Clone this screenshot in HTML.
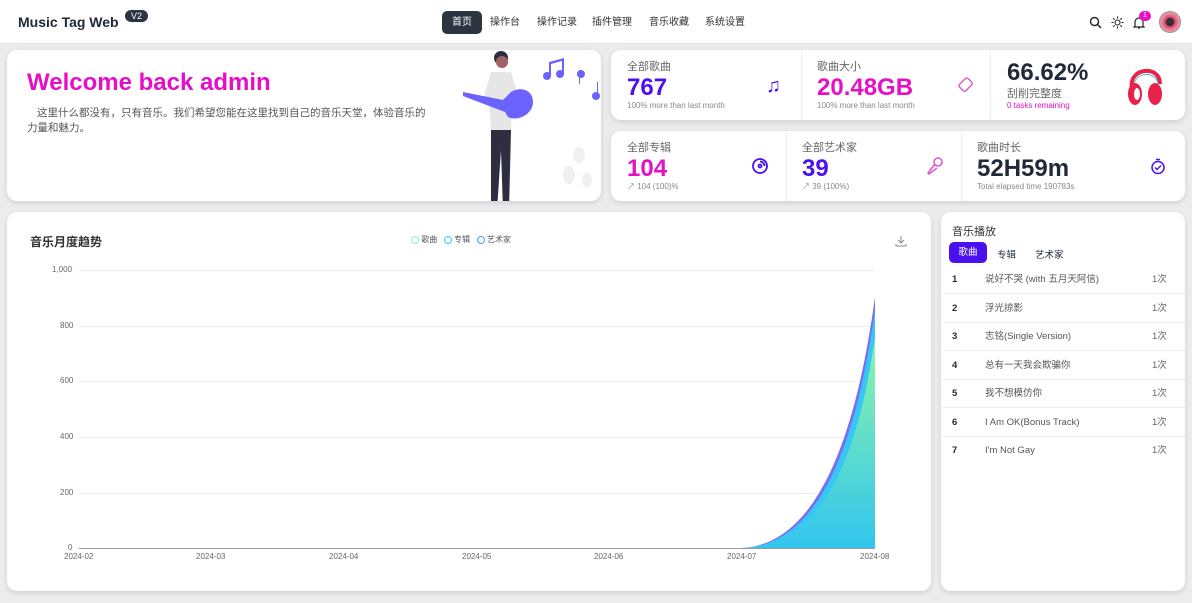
<!DOCTYPE html>
<html><head><meta charset="utf-8"><style>
*{box-sizing:border-box;margin:0;padding:0}
body{width:1192px;height:603px;background:#ececec;font-family:"Liberation Sans","Noto Sans CJK SC",sans-serif;position:relative;overflow:hidden;color:#1f2937}
.card{position:absolute;background:#fff;border-radius:10px;box-shadow:0 2px 6px rgba(0,0,0,.12)}
.hdr{position:absolute;left:0;top:0;width:1192px;height:44px;background:#fff;border-bottom:1px solid #e5e5e5}
.nav{position:absolute;top:11px;font-size:10px;color:#333;height:23px;line-height:23px;padding:0 10px;border-radius:5px}
.lbl{position:absolute;font-size:11px;color:#666;line-height:12px}
.big{position:absolute;font-size:24px;font-weight:bold;line-height:24px}
.sm{position:absolute;font-size:8px;color:#888;line-height:9px}
.row{position:absolute;left:0;width:244px;height:29px;line-height:29px;border-bottom:1px solid #eee;font-size:9.5px}
.row b{position:absolute;left:11px;top:0}
.row span{position:absolute;left:44px;top:0;color:#555}
.row i{position:absolute;left:211px;top:0;color:#666;font-style:normal}
.ax{position:absolute;font-size:8px;color:#666}
</style></head><body>
<div class="hdr">
<div style="position:absolute;left:18px;top:14px;font-size:14px;font-weight:bold">Music Tag Web</div>
<div style="position:absolute;left:125px;top:10px;background:#2b3440;color:#fff;font-size:9px;border-radius:8px;padding:1px 6px">V2</div>
<div class="nav" style="left:442px;background:#2b3440;color:#fff">首页</div>
<div class="nav" style="left:480px">操作台</div>
<div class="nav" style="left:527px">操作记录</div>
<div class="nav" style="left:582px">插件管理</div>
<div class="nav" style="left:639px">音乐收藏</div>
<div class="nav" style="left:695px">系统设置</div>
<svg style="position:absolute;left:1089px;top:16px" width="13" height="13" viewBox="0 0 13 13" fill="none" stroke="#222" stroke-width="1.4"><circle cx="5.5" cy="5.5" r="4"/><path d="M8.5 8.5l3.5 3.5"/></svg>
<svg style="position:absolute;left:1111px;top:16px" width="13" height="13" viewBox="0 0 13 13" fill="none" stroke="#222" stroke-width="1.1"><circle cx="6.5" cy="6.5" r="2.5"/><path d="M6.5 0.5v2M6.5 10.5v2M0.5 6.5h2M10.5 6.5h2M2.2 2.2l1.4 1.4M9.4 9.4l1.4 1.4M2.2 10.8l1.4-1.4M9.4 3.6l1.4-1.4"/></svg>
<svg style="position:absolute;left:1133px;top:16px" width="12" height="13" viewBox="0 0 12 13" fill="none" stroke="#222" stroke-width="1.2"><path d="M2 10V6a4 4 0 018 0v4l1 1H1zM5 12h2"/></svg>
<div style="position:absolute;left:1139px;top:11px;background:#e60fc8;color:#fff;font-size:7px;border-radius:6px;padding:0 4px;line-height:10px">1</div>
<div style="position:absolute;left:1159px;top:11px;width:22px;height:22px;border-radius:50%;background:radial-gradient(circle,#333 25%,#d46 30%,#e9a 60%,#888 70%)"></div>
</div>

<div class="card" style="left:7px;top:50px;width:594px;height:151px;overflow:hidden">
<div style="position:absolute;left:20px;top:19px;font-size:24px;font-weight:bold;color:#e60fc8">Welcome back admin</div>
<div style="position:absolute;left:20px;top:56px;width:400px;font-size:10.5px;line-height:15px;color:#555;text-indent:10px">这里什么都没有，只有音乐。我们希望您能在这里找到自己的音乐天堂，体验音乐的力量和魅力。</div>
<svg style="position:absolute;left:440px;top:0" width="154" height="151" viewBox="440 50 154 151">
<g fill="#f0f0f0"><ellipse cx="572" cy="155" rx="6" ry="8"/><ellipse cx="562" cy="175" rx="6" ry="9"/><ellipse cx="580" cy="180" rx="5" ry="8"/></g>
<circle cx="494" cy="58" r="7" fill="#2f2e41"/><circle cx="495" cy="62" r="6" fill="#a0616a"/>
<path d="M484 72h20l9 30h-8l-1 28h-20l-2-28-6-2z" fill="#e6e6e6"/>
<path d="M484 130h20l-2 80h-6l-2-60-4 60h-6z" fill="#2f2e41"/>
<path d="M456 92l40 8 8-8c10-6 22-2 22 10s-15 20-25 15l-3-5-42-16z" fill="#6c63ff"/>
<g fill="#6c63ff"><circle cx="540" cy="76" r="4"/><circle cx="553" cy="74" r="4"/><path d="M542 62l15-4v16h-2V61l-11 3v12h-2z"/><circle cx="574" cy="74" r="4"/><path d="M572 70v14h1V70z"/><circle cx="589" cy="96" r="4"/><path d="M591 82v14h-1V82z"/></g>
</svg>
</div>

<div class="card" style="left:611px;top:50px;width:574px;height:70px">
<div style="position:absolute;left:190px;top:0;width:1px;height:70px;background:#eee"></div>
<div style="position:absolute;left:379px;top:0;width:1px;height:70px;background:#eee"></div>
<div class="lbl" style="left:16px;top:11px">全部歌曲</div>
<div class="big" style="left:16px;top:26px;color:#4a10f0">767</div>
<div class="sm" style="left:16px;top:51px">100% more than last month</div>
<div style="position:absolute;left:155px;top:25px;font-size:20px;color:#4a10f0">♫</div>
<div class="lbl" style="left:206px;top:11px">歌曲大小</div>
<div class="big" style="left:206px;top:26px;color:#e60fc8">20.48GB</div>
<div class="sm" style="left:206px;top:51px">100% more than last month</div>
<svg style="position:absolute;left:346px;top:26px" width="18" height="18" viewBox="0 0 18 18" fill="none" stroke="#e055c8" stroke-width="1.4"><rect x="4" y="3" width="9" height="12" rx="2" transform="rotate(45 9 9)"/></svg>
<div class="big" style="left:396px;top:11px;color:#1f2937">66.62%</div>
<div class="lbl" style="left:396px;top:38px">刮削完整度</div>
<div class="sm" style="left:396px;top:51px;color:#e60fc8">0 tasks remaining</div>
<svg style="position:absolute;left:515px;top:10px" width="40" height="48" viewBox="0 0 40 48"><path d="M6 28C2 8 34 4 34 24" stroke="#e8224a" stroke-width="4" fill="none"/><path d="M8 26C8 12 30 10 32 24" stroke="#5bb" stroke-width="1" fill="none"/><ellipse cx="9" cy="34" rx="7" ry="11" fill="#e8224a"/><ellipse cx="29" cy="34" rx="7" ry="11" fill="#e8224a"/><ellipse cx="11" cy="34" rx="3" ry="6" fill="#fff"/></svg>
</div>

<div class="card" style="left:611px;top:131px;width:574px;height:70px">
<div style="position:absolute;left:175px;top:0;width:1px;height:70px;background:#eee"></div>
<div style="position:absolute;left:350px;top:0;width:1px;height:70px;background:#eee"></div>
<div class="lbl" style="left:16px;top:11px">全部专辑</div>
<div class="big" style="left:16px;top:26px;color:#e60fc8">104</div>
<div class="sm" style="left:16px;top:51px">↗ 104 (100)%</div>
<svg style="position:absolute;left:140px;top:26px" width="18" height="18" viewBox="0 0 18 18" fill="none" stroke="#4a10f0" stroke-width="1.8"><circle cx="9" cy="9" r="7"/><circle cx="9" cy="9" r="1.5"/><path d="M9 4.5a4.5 4.5 0 014.5 4.5"/></svg>
<div class="lbl" style="left:191px;top:11px">全部艺术家</div>
<div class="big" style="left:191px;top:26px;color:#4a10f0">39</div>
<div class="sm" style="left:191px;top:51px">↗ 39 (100%)</div>
<svg style="position:absolute;left:315px;top:25px" width="18" height="20" viewBox="0 0 18 20" fill="none" stroke="#e055c8" stroke-width="1.5"><circle cx="12" cy="6" r="4"/><path d="M9 8L2 17l1 1 8-6"/></svg>
<div class="lbl" style="left:366px;top:11px">歌曲时长</div>
<div class="big" style="left:366px;top:26px;color:#1f2937">52H59m</div>
<div class="sm" style="left:366px;top:51px">Total elapsed time 190783s</div>
<svg style="position:absolute;left:539px;top:27px" width="16" height="17" viewBox="0 0 16 17" fill="none" stroke="#4a10f0" stroke-width="1.5"><circle cx="8" cy="9.5" r="6"/><path d="M5 9.5l2 2 4-4M6 1.5h4"/></svg>
</div>

<div class="card" style="left:7px;top:212px;width:924px;height:379px">
<div style="position:absolute;left:23px;top:21px;font-size:12px;font-weight:bold;color:#333">音乐月度趋势</div>
<div style="position:absolute;left:404px;top:22px;font-size:8px;color:#555;white-space:nowrap">
<span style="display:inline-block;width:8px;height:8px;border:1.5px solid #8ef0b0;border-radius:50%;vertical-align:middle"></span> 歌曲&nbsp;&nbsp;
<span style="display:inline-block;width:8px;height:8px;border:1.5px solid #2ad3e6;border-radius:50%;vertical-align:middle"></span> 专辑&nbsp;&nbsp;
<span style="display:inline-block;width:8px;height:8px;border:1.5px solid #4aa0f0;border-radius:50%;vertical-align:middle"></span> 艺术家</div>
<svg style="position:absolute;left:888px;top:23px" width="12" height="12" viewBox="0 0 12 12" fill="none" stroke="#888" stroke-width="1"><path d="M6 1v7M3 5l3 3 3-3M1 9v2h10V9"/></svg>
</div>
<svg style="position:absolute;left:0;top:0" width="1192" height="603">
<defs><linearGradient id="g" x1="0" y1="0" x2="0" y2="1"><stop offset="0" stop-color="#8ef5a8"/><stop offset="1" stop-color="#32c5ee"/></linearGradient></defs>
<g stroke="#ececf2" stroke-width="1"><path d="M79 270.5H875M79 326.5H875M79 381.5H875M79 437.5H875M79 493.5H875"/></g>
<path d="M79 548.5H875" stroke="#999"/>
<path d="M742 548 C800 545 850 480 875 297 L875 548Z" fill="#7a6ff0"/>
<path d="M742 548 C800 546 850 490 875 310 L875 548Z" fill="#36c8f4"/>
<path d="M742 548 C802 547 852 500 875 337 L875 548Z" fill="url(#g)"/>
</svg>
<div class="ax" style="left:52px;top:265px">1,000</div>
<div class="ax" style="left:60px;top:321px">800</div>
<div class="ax" style="left:60px;top:376px">600</div>
<div class="ax" style="left:60px;top:432px">400</div>
<div class="ax" style="left:60px;top:488px">200</div>
<div class="ax" style="left:68px;top:543px">0</div>
<div class="ax" style="left:64px;top:552px">2024-02</div>
<div class="ax" style="left:196px;top:552px">2024-03</div>
<div class="ax" style="left:329px;top:552px">2024-04</div>
<div class="ax" style="left:462px;top:552px">2024-05</div>
<div class="ax" style="left:594px;top:552px">2024-06</div>
<div class="ax" style="left:727px;top:552px">2024-07</div>
<div class="ax" style="left:860px;top:552px">2024-08</div>

<div class="card" style="left:941px;top:212px;width:244px;height:379px">
<div style="position:absolute;left:11px;top:11px;font-size:11px;color:#333">音乐播放</div>
<div style="position:absolute;left:8px;top:30px;width:38px;height:21px;background:#4a10f0;color:#fff;border-radius:5px;font-size:9.5px;text-align:center;line-height:21px">歌曲</div>
<div style="position:absolute;left:56px;top:35px;font-size:9.5px">专辑</div>
<div style="position:absolute;left:94px;top:35px;font-size:9.5px">艺术家</div>
<div class="row" style="top:53px"><b>1</b><span>说好不哭 (with 五月天阿信)</span><i>1次</i></div>
<div class="row" style="top:82px"><b>2</b><span>浮光掠影</span><i>1次</i></div>
<div class="row" style="top:110px"><b>3</b><span>志铭(Single Version)</span><i>1次</i></div>
<div class="row" style="top:139px"><b>4</b><span>总有一天我会欺骗你</span><i>1次</i></div>
<div class="row" style="top:167px"><b>5</b><span>我不想模仿你</span><i>1次</i></div>
<div class="row" style="top:196px"><b>6</b><span>I Am OK(Bonus Track)</span><i>1次</i></div>
<div class="row" style="top:224px;border:none"><b>7</b><span>I'm Not Gay</span><i>1次</i></div>
</div>
</body></html>
